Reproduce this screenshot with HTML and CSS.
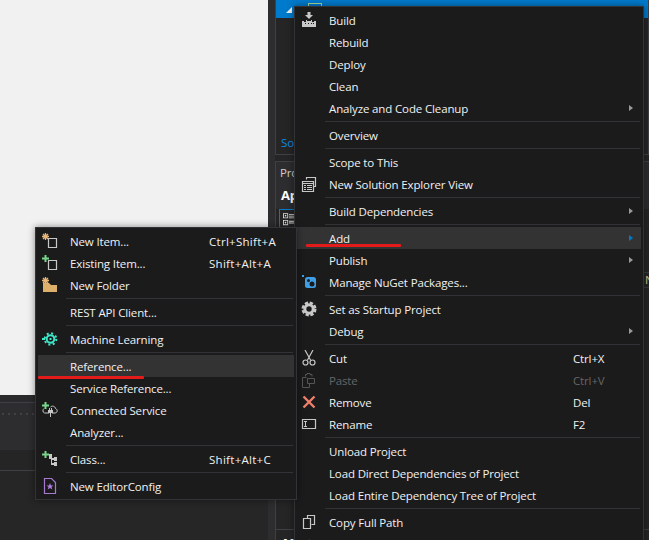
FILE: index.html
```html
<!DOCTYPE html>
<html lang="en">
<head>
<meta charset="utf-8">
<title>Project context menu</title>
<link rel="stylesheet" href="styles.css">
</head>
<body>
<div class="ide">
  <div class="left">
    <div class="doc"></div>
    <div class="strip"></div>
    <div class="tool"><div class="dots"></div></div>
    <div class="tabs"></div>
    <div class="output"></div>
  </div>
  <div class="gutter"></div>
  <div class="right">
    <section class="sol">
      <div class="project">
        <span class="twist"></span>
        <span class="proj-icon"></span>
        <span class="proj-name">Load UWP Wiki (Universal Windows)</span>
      </div>
      <div class="sol-foot">Solution Explorer</div>
    </section>
    <section class="props">
      <div class="props-title">Properties</div>
      <div class="props-sub">App</div>
      <div class="tile">
        <svg class="tile-icon" viewBox="0 0 14 16"><path class="ic-light" d="M0 0h6v6H0zM0 8h6v6H0z"/><path class="ic-dark" d="M1 1h4v4H1zM1 9h4v4H1z"/><path class="ic-light" d="M7 1h7v1H7zM7 3h7v1H7zM7 5h7v1H7zM7 9h7v1H7zM7 11h7v1H7zM2 2.500h2v1H2zM2 10.500h2v1H2zM2.500 2h1v2h-1zM2.500 10h1v2h-1z"/></svg>
      </div>
      <div class="peek">N</div>
      <div class="props-foot">M</div>
    </section>
  </div>
</div>

<nav class="menu menu-main">
  <div class="row"><span class="ico"><svg viewBox="0 0 16 16"><path class="ic-gray" d="M6.500 0h3v3H12L8 7 4 3h2.500zM1 15V9h2v1h2V8h1v1h4V8h1v2h2V9h2v6z"/><path class="ic-hole" d="M4 11h1v1H4zM7 11h1v1H7zM10 11h1v1h-1zM12 11h1v1h-1z"/></svg></span><span class="lbl">Build</span></div>
  <div class="row"><span class="ico"></span><span class="lbl">Rebuild</span></div>
  <div class="row"><span class="ico"></span><span class="lbl">Deploy</span></div>
  <div class="row"><span class="ico"></span><span class="lbl">Clean</span></div>
  <div class="row"><span class="ico"></span><span class="lbl">Analyze and Code Cleanup</span><span class="key"></span><span class="arrow"></span></div>
  <div class="sep"></div>
  <div class="row"><span class="ico"></span><span class="lbl">Overview</span></div>
  <div class="sep"></div>
  <div class="row"><span class="ico"></span><span class="lbl">Scope to This</span></div>
  <div class="row"><span class="ico"><svg viewBox="0 0 16 16"><path class="ic-line" d="M5.500 3.500v-2h9v9h-2M1.500 5.500h11v10h-11zM1.500 7.500h11"/><path class="ic-gray" d="M3 9h2v1H3zM6 9h5v1H6zM3 11h2v1H3zM6 11h5v1H6zM3 13h2v1H3zM6 13h5v1H6z"/></svg></span><span class="lbl">New Solution Explorer View</span></div>
  <div class="sep"></div>
  <div class="row"><span class="ico"></span><span class="lbl">Build Dependencies</span><span class="key"></span><span class="arrow"></span></div>
  <div class="sep"></div>
  <div class="row row-on"><span class="ico"></span><span class="lbl">Add</span><span class="key"></span><span class="arrow arrow-on"></span><span class="mark mark-add"></span></div>
  <div class="row"><span class="ico"></span><span class="lbl">Publish</span><span class="key"></span><span class="arrow"></span></div>
  <div class="row"><span class="ico"><svg viewBox="0 0 16 16"><path class="ic-blue" d="M1 1h2v2H1z"/><rect class="ic-blue" x="4" y="3" width="11" height="11" rx="2.500"/><circle class="ic-hole" cx="7.500" cy="6.500" r="1.500"/><circle class="ic-hole" cx="11" cy="10" r="2.500"/></svg></span><span class="lbl">Manage NuGet Packages...</span></div>
  <div class="sep"></div>
  <div class="row"><span class="ico"><svg viewBox="0 0 16 16"><circle class="gear-ring" cx="8" cy="8" r="4.200"/><circle class="gear-teeth" cx="8" cy="8" r="6.200"/></svg></span><span class="lbl">Set as Startup Project</span></div>
  <div class="row"><span class="ico"></span><span class="lbl">Debug</span><span class="key"></span><span class="arrow"></span></div>
  <div class="sep"></div>
  <div class="row"><span class="ico"><svg viewBox="0 0 16 16"><path class="ic-line" d="M4 0l5.500 10M12 0L6.500 10"/><circle class="ic-line" cx="4.500" cy="12.500" r="2.500"/><circle class="ic-line" cx="11.500" cy="12.500" r="2.500"/></svg></span><span class="lbl">Cut</span><span class="key">Ctrl+X</span></div>
  <div class="row row-off"><span class="ico"><svg viewBox="0 0 16 16"><path class="ic-line-off" d="M5.500 5.500H1.500v10h7v-4M4.500 4.500v-2h1.500v-1h3v1h2v2M6.500 6.500h7v5h-7z"/></svg></span><span class="lbl">Paste</span><span class="key">Ctrl+V</span></div>
  <div class="row"><span class="ico"><svg viewBox="0 0 16 16"><path class="ic-x" d="M2.500 2.500l11 11M13.500 2.500l-11 11"/></svg></span><span class="lbl">Remove</span><span class="key">Del</span></div>
  <div class="row"><span class="ico"><svg viewBox="0 0 16 16"><path class="ic-line" d="M1.500 3.500h13v9h-13z"/><path class="ic-thin" d="M3 5.500h3M4.500 5.500v5M3 10.500h3"/></svg></span><span class="lbl">Rename</span><span class="key">F2</span></div>
  <div class="sep"></div>
  <div class="row"><span class="ico"></span><span class="lbl">Unload Project</span></div>
  <div class="row"><span class="ico"></span><span class="lbl">Load Direct Dependencies of Project</span></div>
  <div class="row"><span class="ico"></span><span class="lbl">Load Entire Dependency Tree of Project</span></div>
  <div class="sep"></div>
  <div class="row"><span class="ico"><svg viewBox="0 0 16 16"><path class="ic-line" d="M6.500 4.500v-3h7v9h-3M2.500 4.500h7v10h-7z"/></svg></span><span class="lbl">Copy Full Path</span></div>
  <div class="row"><span class="ico"><svg viewBox="0 0 16 16"><path class="ic-arrow" d="M8 3l6 7-3 0z"/></svg></span><span class="lbl"></span></div>
</nav>

<nav class="menu menu-sub">
  <div class="row"><span class="ico"><svg viewBox="0 0 16 16"><path class="ic-line" d="M6.500 5.500h8v9h-8z"/><path class="ic-star" d="M3.500 0v7M0 3.500h7M1 1l5 5M6 1L1 6"/></svg></span><span class="lbl">New Item...</span><span class="key">Ctrl+Shift+A</span></div>
  <div class="row"><span class="ico"><svg viewBox="0 0 16 16"><path class="ic-line" d="M6.500 5.500h8v9h-8z"/><path class="ic-green" d="M2.500 0h2v2.500H7v2H4.500V7h-2V4.500H0v-2h2.500z"/></svg></span><span class="lbl">Existing Item...</span><span class="key">Shift+Alt+A</span></div>
  <div class="row"><span class="ico"><svg viewBox="0 0 16 16"><path class="ic-folder" d="M1 6h6l2 2h6v7H1z"/><path class="ic-star" d="M3.500 0v7M0 3.500h7M1 1l5 5M6 1L1 6"/></svg></span><span class="lbl">New Folder</span></div>
  <div class="sep"></div>
  <div class="row"><span class="ico"></span><span class="lbl">REST API Client...</span></div>
  <div class="sep"></div>
  <div class="row"><span class="ico"><svg viewBox="0 0 16 16"><circle class="ml-ring" cx="8.500" cy="8" r="3.800"/><circle class="ml-teeth" cx="8.500" cy="8" r="5.800"/><path class="ic-teal" d="M0 7h3v2H0zM7.500 7h2v2h-2z"/></svg></span><span class="lbl">Machine Learning</span></div>
  <div class="sep"></div>
  <div class="row row-on"><span class="ico"></span><span class="lbl">Reference...</span><span class="mark mark-ref"></span></div>
  <div class="row"><span class="ico"></span><span class="lbl">Service Reference...</span></div>
  <div class="row"><span class="ico"><svg viewBox="0 0 16 16"><path class="ic-thin" d="M2 6.500c-1.500 1-1.500 4 .5 4.500H7M10 11h3c2.500 0 3-3.500 .5-4.500C13 4 10 3.500 8.500 5"/><path class="ic-gray" d="M6 8h1V6h1v2h1V6h1v2h1v3H9v4H8v-4H6z"/><path class="ic-green" d="M2.500 0h2v2.500H7v2H4.500V7h-2V4.500H0v-2h2.500z"/></svg></span><span class="lbl">Connected Service</span></div>
  <div class="row"><span class="ico"></span><span class="lbl">Analyzer...</span></div>
  <div class="sep"></div>
  <div class="row"><span class="ico"><svg viewBox="0 0 16 16"><path class="ic-gray" d="M7 3h3v4h2V6h3v4h-3V9h-2v3h2v-1h3v4h-3v-1H9V8H7z"/><path class="ic-green" d="M2.500 0h2v2.500H7v2H4.500V7h-2V4.500H0v-2h2.500z"/></svg></span><span class="lbl">Class...</span><span class="key">Shift+Alt+C</span></div>
  <div class="sep"></div>
  <div class="row"><span class="ico"><svg viewBox="0 0 16 16"><path class="ic-doc" d="M2.500 .5h7l4 4v11h-11z"/><path class="ic-purple" d="M8 5l1 2.500h2.500L9.500 9l.8 2.600L8 10.100l-2.300 1.500.8-2.600-2-1.500H7z"/></svg></span><span class="lbl">New EditorConfig</span></div>
</nav>
</body>
</html>
```
FILE: styles.css
```css
* { box-sizing: border-box; }
html, body { margin: 0; height: 540px; overflow: hidden; background: #252526; }
body { font-family: "Open Sans", "Liberation Sans", sans-serif; font-size: 11.5px; letter-spacing: -.14px; color: #f1f1f1; }

.ide { display: flex; height: 540px; }

.left { width: 268px; display: flex; flex-direction: column; flex: none; }
.doc { height: 395px; background: #f1f1f1; }
.strip { height: 8px; background: #2a2a2d; border-bottom: 1px solid #3f3f46; }
.tool { height: 47px; background: #2d2d30; padding-top: 9px; }
.dots { height: 4px; background-image: radial-gradient(#404045 1px, transparent 1px); background-size: 6px 4px; }
.tabs { height: 21px; background: #252526; border-bottom: 1px solid #3f3f46; }
.output { flex: 1; background: #262627; }

.gutter { width: 7px; flex: none; background: #2d2d30; }

.right { flex: 1; display: flex; flex-direction: column; gap: 6px; min-width: 0; }

.sol { height: 155px; border: 1px solid #3f3f46; border-top: 0; background: #252526; display: flex; flex-direction: column; justify-content: space-between; }
.project { height: 18px; padding-top: 1px; background: #007acc; display: flex; align-items: center; white-space: nowrap; }
.twist { width: 0; height: 0; margin-left: 10px; border-bottom: 6px solid #f1f1f1; border-left: 6px solid transparent; }
.proj-icon { width: 14px; height: 14px; margin-left: 16px; border: 1px solid #a9d8a0; flex: none; }
.proj-name { margin-left: 9px; font-weight: 600; }
.sol-foot { height: 22px; line-height: 22px; padding-left: 5px; color: #0e8ae0; white-space: nowrap; }

.props { flex: 1; border-left: 1px solid #3f3f46; display: flex; flex-direction: column; background: #252526; min-height: 0; }
.props-title { height: 22px; line-height: 22px; padding-left: 4px; color: #d0d0d0; border-top: 1px solid #3f3f46; background: #2d2d30; }
.props-sub { height: 26px; line-height: 24px; padding-left: 5px; font-size: 13px; font-weight: 700; color: #fff; background: #2d2d30; }
.tile { width: 24px; height: 24px; margin-left: 3px; border: 1px solid #007acc; padding: 2px 3px; }
.tile-icon { display: block; width: 12px; height: 16px; }
.peek { margin-top: 39px; padding-left: 369px; height: 16px; line-height: 14px; color: #d8c49a; border-top: 1px solid #3a3a3d; border-bottom: 1px solid #3a3a3d; }
.props-foot { margin-top: auto; height: 11px; padding: 8px 0 0 7px; line-height: 12px; font-size: 12px; font-weight: 700; color: #fff; border-top: 1px solid #3f3f46; overflow: hidden; }

/* context menus */
.menu { position: absolute; background: #1b1b1c; border: 1px solid #333337; padding: 2px; box-shadow: 0 0 7px rgba(0, 0, 0, .45); }
.menu-main { left: 294px; top: 6px; width: 350px; }
.menu-sub { left: 35px; top: 227px; width: 262px; }

.row { position: relative; height: 22px; display: grid; align-items: center; white-space: nowrap; }
.menu-main .row { grid-template-columns: 32px 244px 48px 20px; }
.menu-sub .row { grid-template-columns: 32px 139px 85px; }
.row-on { background: #333334; }
.row-off { color: #656565; }

.ico { display: flex; padding-left: 4px; }
.ico svg { display: block; width: 16px; height: 16px; }
.lbl, .key { display: block; height: 22px; line-height: 24px; }
.menu-sub .key { letter-spacing: .28px; }

.sep { height: 1px; margin: 2px 1px 2px 28px; background: #333337; }

.arrow { width: 0; height: 0; margin-left: 8px; border-left: 4px solid #999; border-top: 3.5px solid transparent; border-bottom: 3.5px solid transparent; }
.arrow-on { border-left-color: #007acc; }

.mark { position: absolute; height: 3px; background: #e31b1b; border-radius: 1px; }
.mark-add { left: 9px; top: 17px; width: 95px; }
.mark-ref { left: 0; top: 21px; width: 106px; }

/* icon paints */
svg path, svg circle, svg rect { fill: none; }
svg .ic-gray { fill: #c8c8c8; }
svg .ic-light { fill: #e0e0e0; }
svg .ic-dark, svg .ic-hole { fill: #1b1b1c; }
.ic-line { stroke: #c8c8c8; stroke-width: 1.2; }
.ic-line-off { stroke: #555; stroke-width: 1; }
.ic-thin { stroke: #c8c8c8; stroke-width: 1; }
svg .ic-blue { fill: #3f9fe6; }
.ic-x { stroke: #f0806c; stroke-width: 2.400; }
.ic-star { stroke: #e8b778; stroke-width: 1.300; }
svg .ic-green { fill: #78d68a; }
svg .ic-folder { fill: #dcb06a; }
svg .ic-teal { fill: #3ee6c8; }
.ic-doc { stroke: #a678d0; stroke-width: 1.200; }
svg .ic-purple { fill: #b07ae0; }
svg .ic-arrow { fill: #3f9fe6; }
.gear-ring { stroke: #c8c8c8; stroke-width: 3; }
.gear-teeth { stroke: #c8c8c8; stroke-width: 2.600; stroke-dasharray: 3.200 1.670; }
.ml-ring { stroke: #3ee6c8; stroke-width: 2; }
.ml-teeth { stroke: #3ee6c8; stroke-width: 2; stroke-dasharray: 2 2.550; }
```
